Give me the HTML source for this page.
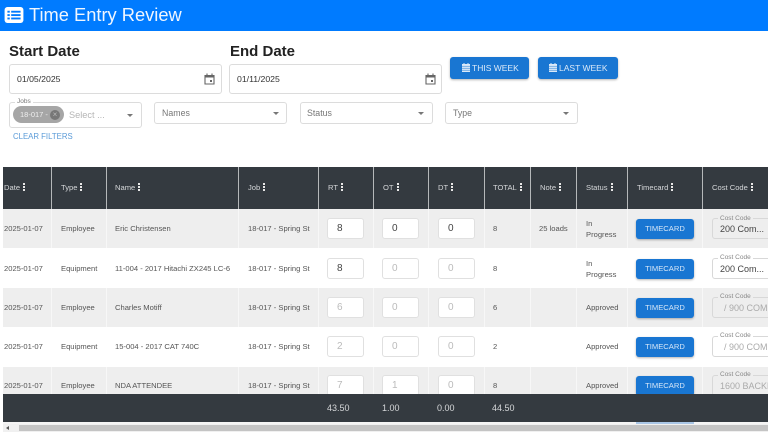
<!DOCTYPE html>
<html><head><meta charset="utf-8">
<style>
html,body{margin:0;padding:0;background:#fff}
body{width:768px;height:432px;overflow:hidden;position:relative;font-family:"Liberation Sans",sans-serif;color:#333;filter:blur(.3px)}
div,span{position:absolute;box-sizing:border-box;white-space:nowrap}
svg{position:absolute}
.lab{font-size:15px;font-weight:bold;color:#222}
.box{border:1px solid #dcdcdc;border-radius:3px;background:#fff}
.ph{font-size:8.8px;color:#777}
.arr{width:0;height:0;border-left:3px solid transparent;border-right:3px solid transparent;border-top:3px solid #777}
.btn{background:#1976d2;border-radius:3px;box-shadow:0 1px 2px rgba(0,0,0,.3)}
.bt{color:#dbe9f8;font-size:8.5px;line-height:22px;top:57px}
.th{top:167px;height:42px;background:#343a40;color:#d5d7d9;font-size:7.6px;line-height:42px}
.sep{top:167px;height:42px;width:1px;background:#b5b8ba}
.dots{display:inline-block;position:relative;width:2px;height:8px;margin-left:3px;vertical-align:-1px;background:repeating-linear-gradient(#e8e8e8 0 2px,transparent 2px 3px)}
.row{left:3px;width:765px;height:40px}
.t{font-size:7.6px;color:#555}
.in{width:37px;height:21px;border:1px solid #e0e0e0;border-radius:3px;background:#fff;font-size:10px;line-height:19px;padding-left:9px;color:#444}
.d{color:#bbb}
.tc{left:636px;width:58px;height:20px;line-height:19px;font-size:7.6px;background:#1976d2;border-radius:3px;color:#d6e6f7;box-shadow:0 1px 2px rgba(0,0,0,.3);text-align:center}
.cc{left:712px;width:70px;height:21px;border:1px solid #d8d8d8;border-radius:3px;font-size:9px;line-height:20px;padding-left:7px;color:#444}
.cl{left:718px;font-size:6.5px;color:#888;padding:0 2px;line-height:7px;height:7px}
.v{width:1px;background:rgba(255,255,255,.5)}
.f{top:394px;font-size:9px;line-height:28px;color:#d5d7d9}
</style></head><body>

<div style="left:0;top:0;width:768px;height:31px;background:#007bff"></div>
<svg style="left:4px;top:7px" width="20" height="16" viewBox="0 0 20 17"><rect width="20" height="17" rx="3" fill="#fff"/><g fill="#007bff"><rect x="3" y="4" width="2.5" height="2"/><rect x="3" y="7.6" width="2.5" height="2"/><rect x="3" y="11.2" width="2.5" height="2"/><rect x="7" y="4" width="10" height="2"/><rect x="7" y="7.6" width="10" height="2"/><rect x="7" y="11.2" width="10" height="2"/></g></svg>
<div style="left:29px;top:3px;font-size:18.3px;line-height:24px;color:#f0f6ff">Time Entry Review</div>

<div class="lab" style="left:9px;top:42px;line-height:19px">Start Date</div>
<div class="lab" style="left:230px;top:42px;line-height:19px">End Date</div>

<div class="box" style="left:9px;top:64px;width:213px;height:30px"></div>
<div style="left:17px;top:73px;font-size:8.7px;line-height:12px;color:#333">01/05/2025</div>
<svg style="left:204px;top:73px" width="11" height="12" viewBox="0 0 11 12"><path d="M1 2.5h9v8.500H1z" fill="none" stroke="#666" stroke-width="1.100"/><rect x="1" y="2" width="9" height="2.500" fill="#666"/><path d="M3 .5v2M8 .5v2" stroke="#666" stroke-width="1.100"/><rect x="6" y="7" width="2" height="2" fill="#666"/></svg>
<div class="box" style="left:229px;top:64px;width:213px;height:30px"></div>
<div style="left:237px;top:73px;font-size:8.7px;line-height:12px;color:#333">01/11/2025</div>
<svg style="left:425px;top:73px" width="11" height="12" viewBox="0 0 11 12"><path d="M1 2.5h9v8.500H1z" fill="none" stroke="#666" stroke-width="1.100"/><rect x="1" y="2" width="9" height="2.500" fill="#666"/><path d="M3 .5v2M8 .5v2" stroke="#666" stroke-width="1.100"/><rect x="6" y="7" width="2" height="2" fill="#666"/></svg>

<div class="btn" style="left:450px;top:57px;width:79px;height:22px"></div>
<div class="bt" style="left:472px">THIS WEEK</div>
<svg style="left:462px;top:63px" width="8" height="9" viewBox="0 0 8 9"><path d="M0 1h8v8H0z" fill="#dbe9f8"/><path d="M2 0v2M6 0v2" stroke="#dbe9f8" stroke-width="1"/><path d="M0 3.200h8M0 5.200h8M0 7.200h8" stroke="#1976d2" stroke-width=".5"/></svg>
<div class="btn" style="left:538px;top:57px;width:80px;height:22px"></div>
<div class="bt" style="left:559px">LAST WEEK</div>
<svg style="left:549px;top:63px" width="8" height="9" viewBox="0 0 8 9"><path d="M0 1h8v8H0z" fill="#dbe9f8"/><path d="M2 0v2M6 0v2" stroke="#dbe9f8" stroke-width="1"/><path d="M0 3.200h8M0 5.200h8M0 7.200h8" stroke="#1976d2" stroke-width=".5"/></svg>

<div class="box" style="left:9px;top:102px;width:133px;height:26px"></div>
<div style="left:15px;top:98px;background:#fff;padding:0 2px;font-size:6.5px;line-height:7px;height:7px;color:#777">Jobs</div>
<div style="left:13px;top:106px;width:51px;height:17px;border-radius:9px;background:#a6a6a6"></div>
<div style="left:20px;top:110px;font-size:7.5px;line-height:9px;color:#eee">18-017 -</div>
<div style="left:50px;top:110px;width:10px;height:10px;border-radius:50%;background:#777;color:#bbb;font-size:8px;line-height:9px;text-align:center">×</div>
<div style="left:69px;top:109px;font-size:9.2px;line-height:12px;color:#b5b5b5">Select ...</div>
<div class="arr" style="left:127px;top:114px"></div>

<div class="box" style="left:154px;top:102px;width:133px;height:22px"></div>
<div class="ph" style="left:162px;top:107px;line-height:12px">Names</div>
<div class="arr" style="left:273px;top:112px"></div>
<div class="box" style="left:300px;top:102px;width:133px;height:22px"></div>
<div class="ph" style="left:307px;top:107px;line-height:12px">Status</div>
<div class="arr" style="left:418px;top:112px"></div>
<div class="box" style="left:445px;top:102px;width:133px;height:22px"></div>
<div class="ph" style="left:453px;top:107px;line-height:12px">Type</div>
<div class="arr" style="left:563px;top:112px"></div>
<div style="left:13px;top:132px;font-size:7.8px;line-height:10px;color:#5b9bd8">CLEAR FILTERS</div>

<!-- table bands -->
<div class="row" style="top:209px;height:39px;background:#eee"></div>
<div class="row" style="top:248px;background:#fff"></div>
<div class="row" style="top:288px;height:39px;background:#eee"></div>
<div class="row" style="top:327px;background:#fff"></div>
<div class="row" style="top:367px;height:27px;background:#eee"></div>

<!-- cell gaps -->
<div class="v" style="left:51px;top:209px;height:185px"></div>
<div class="v" style="left:106px;top:209px;height:185px"></div>
<div class="v" style="left:238px;top:209px;height:185px"></div>
<div class="v" style="left:318px;top:209px;height:185px"></div>
<div class="v" style="left:373px;top:209px;height:185px"></div>
<div class="v" style="left:428px;top:209px;height:185px"></div>
<div class="v" style="left:484px;top:209px;height:185px"></div>
<div class="v" style="left:530px;top:209px;height:185px"></div>
<div class="v" style="left:576px;top:209px;height:185px"></div>
<div class="v" style="left:627px;top:209px;height:185px"></div>
<div class="v" style="left:702px;top:209px;height:185px"></div>

<!-- header -->
<div class="th" style="left:3px;width:765px"></div>
<div class="th" style="left:4px">Date<i class="dots"></i></div>
<div class="th" style="left:61px">Type<i class="dots"></i></div>
<div class="th" style="left:115px">Name<i class="dots"></i></div>
<div class="th" style="left:248px">Job<i class="dots"></i></div>
<div class="th" style="left:328px">RT<i class="dots"></i></div>
<div class="th" style="left:383px">OT<i class="dots"></i></div>
<div class="th" style="left:438px">DT<i class="dots"></i></div>
<div class="th" style="left:493px">TOTAL<i class="dots"></i></div>
<div class="th" style="left:540px">Note<i class="dots"></i></div>
<div class="th" style="left:586px">Status<i class="dots"></i></div>
<div class="th" style="left:637px">Timecard<i class="dots"></i></div>
<div class="th" style="left:712px">Cost Code<i class="dots"></i></div>
<div class="sep" style="left:51px"></div><div class="sep" style="left:106px"></div><div class="sep" style="left:238px"></div><div class="sep" style="left:318px"></div><div class="sep" style="left:373px"></div><div class="sep" style="left:428px"></div><div class="sep" style="left:484px"></div><div class="sep" style="left:530px"></div><div class="sep" style="left:576px"></div><div class="sep" style="left:627px"></div><div class="sep" style="left:702px"></div>

<!-- row 1 -->
<div class="t" style="left:4px;top:224px">2025-01-07</div><div class="t" style="left:61px;top:224px">Employee</div><div class="t" style="left:115px;top:224px">Eric Christensen</div><div class="t" style="left:248px;top:224px">18-017 - Spring St</div>
<div class="in" style="left:327px;top:218px">8</div><div class="in" style="left:382px;top:218px">0</div><div class="in" style="left:438px;top:218px">0</div>
<div class="t" style="left:493px;top:224px">8</div><div class="t" style="left:539px;top:224px">25 loads</div>
<div class="t" style="left:586px;top:219px">In</div><div class="t" style="left:586px;top:230px">Progress</div>
<div class="tc" style="top:219px">TIMECARD</div>
<div class="cc" style="top:218px">200 Com...</div><div class="cl" style="top:215px;background:#eee">Cost Code</div>

<!-- row 2 -->
<div class="t" style="left:4px;top:264px">2025-01-07</div><div class="t" style="left:61px;top:264px">Equipment</div><div class="t" style="left:115px;top:264px">11-004 - 2017 Hitachi ZX245 LC-6</div><div class="t" style="left:248px;top:264px">18-017 - Spring St</div>
<div class="in" style="left:327px;top:258px">8</div><div class="in d" style="left:382px;top:258px">0</div><div class="in d" style="left:438px;top:258px">0</div>
<div class="t" style="left:493px;top:264px">8</div>
<div class="t" style="left:586px;top:259px">In</div><div class="t" style="left:586px;top:270px">Progress</div>
<div class="tc" style="top:259px">TIMECARD</div>
<div class="cc" style="top:258px">200 Com...</div><div class="cl" style="top:254px;background:#fff">Cost Code</div>

<!-- row 3 -->
<div class="t" style="left:4px;top:303px">2025-01-07</div><div class="t" style="left:61px;top:303px">Employee</div><div class="t" style="left:115px;top:303px">Charles Motiff</div><div class="t" style="left:248px;top:303px">18-017 - Spring St</div>
<div class="in d" style="left:327px;top:297px">6</div><div class="in d" style="left:382px;top:297px">0</div><div class="in d" style="left:438px;top:297px">0</div>
<div class="t" style="left:493px;top:303px">6</div><div class="t" style="left:586px;top:303px">Approved</div>
<div class="tc" style="top:298px">TIMECARD</div>
<div class="cc" style="top:297px;color:#aaa;padding-left:11px;background:#eee">/ 900 COMP</div><div class="cl" style="top:293px;background:#eee">Cost Code</div>

<!-- row 4 -->
<div class="t" style="left:4px;top:342px">2025-01-07</div><div class="t" style="left:61px;top:342px">Equipment</div><div class="t" style="left:115px;top:342px">15-004 - 2017 CAT 740C</div><div class="t" style="left:248px;top:342px">18-017 - Spring St</div>
<div class="in d" style="left:327px;top:336px">2</div><div class="in d" style="left:382px;top:336px">0</div><div class="in d" style="left:438px;top:336px">0</div>
<div class="t" style="left:493px;top:342px">2</div><div class="t" style="left:586px;top:342px">Approved</div>
<div class="tc" style="top:337px">TIMECARD</div>
<div class="cc" style="top:336px;color:#aaa;padding-left:11px;background:#fff">/ 900 COMP</div><div class="cl" style="top:332px;background:#fff">Cost Code</div>

<!-- row 5 -->
<div class="t" style="left:4px;top:381px">2025-01-07</div><div class="t" style="left:61px;top:381px">Employee</div><div class="t" style="left:115px;top:381px">NDA ATTENDEE</div><div class="t" style="left:248px;top:381px">18-017 - Spring St</div>
<div class="in d" style="left:327px;top:375px">7</div><div class="in d" style="left:382px;top:375px">1</div><div class="in d" style="left:438px;top:375px">0</div>
<div class="t" style="left:493px;top:381px">8</div><div class="t" style="left:586px;top:381px">Approved</div>
<div class="tc" style="top:376px">TIMECARD</div>
<div class="cc" style="top:375px;color:#aaa;background:#eee">1600 BACKF</div><div class="cl" style="top:371px;background:#eee">Cost Code</div>

<!-- footer -->
<div style="left:0;top:394px;width:3px;height:38px;background:#fff"></div>
<div style="left:3px;top:394px;width:765px;height:28px;background:#343a40"></div>
<div class="f" style="left:327px">43.50</div><div class="f" style="left:382px">1.00</div><div class="f" style="left:437px">0.00</div><div class="f" style="left:492px">44.50</div>
<div style="left:3px;top:422px;width:765px;height:2px;background:#f4f4f4"></div>
<div style="left:636px;top:422px;width:58px;height:2px;background:#a9c6e6"></div>

<!-- scrollbar -->
<div style="left:3px;top:424px;width:765px;height:8px;background:#f0f0f0"></div>
<div style="left:19px;top:425px;width:749px;height:6px;background:#c4c4c4"></div>
<div style="left:6px;top:426px;width:0;height:0;border-top:2px solid transparent;border-bottom:2px solid transparent;border-right:3px solid #555"></div>
</body></html>
